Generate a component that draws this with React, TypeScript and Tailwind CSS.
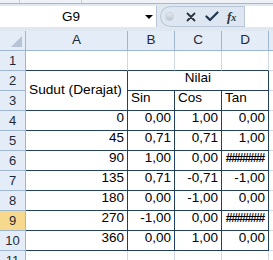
import React from "react";

const cols = ["A", "B", "C", "D"];

// Data rows 4..10: degrees, sin, cos, tan
const rows: [string, string, string, string][] = [
  ["0", "0,00", "1,00", "0,00"],
  ["45", "0,71", "0,71", "1,00"],
  ["90", "1,00", "0,00", "#######"],
  ["135", "0,71", "-0,71", "-1,00"],
  ["180", "0,00", "-1,00", "0,00"],
  ["270", "-1,00", "0,00", "#######"],
  ["360", "0,00", "1,00", "0,00"],
];

const GRID = "border-[#d0d7e5]";
const DARK = "border-[#24405f]";

function RowHead({ n, active }: { n: number; active?: boolean }) {
  return (
    <div
      className={`h-5 w-[26px] shrink-0 border-r border-b border-[#9eb6ce] flex items-center justify-center text-[13px] text-[#1e2a3a] ${
        active ? "bg-[#f7d98e]" : "bg-[#e4ecf7]"
      }`}
    >
      {n}
    </div>
  );
}

export default function App() {
  return (
    <div
      className="w-[273px] h-[260px] overflow-hidden bg-[#dfe7f1] text-black select-none"
      style={{ fontFamily: '"Liberation Sans", Arial, sans-serif' }}
    >
      {/* ribbon edge */}
      <div className="h-[4px] bg-[#eef1f6] border-b border-[#a9b8cb] flex">
        <div className="w-[20px] border-r border-[#c5d0de]" />
        <div className="w-[62px] border-r border-[#c5d0de]" />
      </div>

      {/* formula bar */}
      <div className="mt-[2px] h-[21px] flex items-stretch">
        <div className="w-[157px] bg-white border-r border-[#b9c7d8] flex items-center relative">
          <span className="flex-1 text-center text-[13.5px] leading-none pr-[14px]">G9</span>
          <span className="absolute right-[3px] top-[9px] w-0 h-0 border-l-[4px] border-r-[4px] border-t-[4px] border-l-transparent border-r-transparent border-t-black" />
        </div>
        <div className="ml-[3px] w-[84px] rounded-l-[11px] border border-r-0 border-[#b9c7d8] bg-[#dde6f1] flex items-center">
          <span className="ml-[4px] w-[9px] h-[9px] rounded-full bg-gradient-to-b from-[#e8edf3] to-[#b7c2cf] border border-[#c8d1dc]" />
          <svg className="ml-[12px]" width="10" height="10" viewBox="0 0 10 10">
            <path d="M1.5 1.5 L8.5 8.5 M8.5 1.5 L1.5 8.5" stroke="#2a3340" strokeWidth="1.8" strokeLinecap="round" />
          </svg>
          <svg className="ml-[9px]" width="14" height="11" viewBox="0 0 14 11">
            <path d="M1.5 5.5 L5 9 L12.5 1.5" stroke="#1f3550" strokeWidth="2.2" fill="none" strokeLinecap="round" strokeLinejoin="round" />
          </svg>
          <span
            className="ml-[8px] text-[13px] italic font-bold text-[#2a3340] leading-none"
            style={{ fontFamily: '"Liberation Serif", serif' }}
          >
            f<span className="text-[10px]">x</span>
          </span>
        </div>
        <div className="flex-1 bg-white border-l border-[#b9c7d8]" />
      </div>

      {/* sheet */}
      <div className="mt-[4px] bg-white">
        {/* column headers */}
        <div className="flex h-5 bg-[#e4ecf7] border-b border-[#9eb6ce]">
          <div className="w-[26px] shrink-0 border-r border-[#9eb6ce] relative">
            <svg className="absolute right-[3px] bottom-[3px]" width="11" height="11" viewBox="0 0 11 11">
              <path d="M11 0 L11 11 L0 11 Z" fill="#b6c4d6" />
            </svg>
          </div>
          {cols.map((c, i) => (
            <div
              key={c}
              className={`${i === 0 ? "w-[102px]" : "w-[47px]"} shrink-0 border-r border-[#9eb6ce] flex items-center justify-center text-[13.5px] text-[#1e2a3a]`}
            >
              {c}
            </div>
          ))}
          <div className="flex-1" />
        </div>

        {/* row 1 */}
        <div className="flex h-5">
          <RowHead n={1} />
          <div className={`w-[102px] border-r border-b ${GRID} !border-b-[#24405f]`} />
          <div className={`w-[47px] border-r border-b ${GRID} !border-b-[#24405f]`} />
          <div className={`w-[47px] border-r border-b ${GRID} !border-b-[#24405f]`} />
          <div className={`w-[47px] border-r border-b ${GRID} !border-b-[#24405f]`} />
          <div className={`flex-1 border-b ${GRID}`} />
        </div>

        {/* rows 2-3 with merged cells */}
        <div className="flex h-10">
          <div className="flex flex-col">
            <RowHead n={2} />
            <RowHead n={3} />
          </div>
          <div className={`w-[102px] border-r border-b ${DARK} flex items-center pl-[3px] text-[13.7px]`}>
            Sudut (Derajat)
          </div>
          <div className="flex flex-col w-[141px]">
            <div className={`h-5 border-r border-b ${DARK} flex items-end justify-center pb-[2px] text-[13.5px]`}>
              Nilai
            </div>
            <div className="flex h-5">
              {["Sin", "Cos", "Tan"].map((t) => (
                <div key={t} className={`w-[47px] border-r border-b ${DARK} flex items-end pl-[3px] pb-[2px] text-[13.5px]`}>
                  {t}
                </div>
              ))}
            </div>
          </div>
          <div className="flex-1 flex flex-col">
            <div className={`h-5 border-b ${GRID}`} />
            <div className={`h-5 border-b ${GRID}`} />
          </div>
        </div>

        {/* data rows */}
        {rows.map((r, i) => (
          <div key={i} className="flex h-5">
            <RowHead n={i + 4} active={i + 4 === 9} />
            {r.map((v, j) => (
              <div
                key={j}
                className={`${j === 0 ? "w-[102px]" : "w-[47px]"} shrink-0 border-r border-b ${DARK} flex items-end justify-end pr-[3px] pb-[2px] text-[13.5px] overflow-hidden whitespace-nowrap`}
              >
                {v.startsWith("#") ? (
                  <span className="text-[12px] tracking-[-1.2px] font-bold pb-[1px] pr-[1px]">{v}</span>
                ) : (
                  v
                )}
              </div>
            ))}
            <div className={`flex-1 border-b ${GRID}`} />
          </div>
        ))}

        {/* row 11 */}
        <div className="flex h-5">
          <RowHead n={11} />
          <div className={`w-[102px] border-r border-b ${GRID}`} />
          <div className={`w-[47px] border-r border-b ${GRID}`} />
          <div className={`w-[47px] border-r border-b ${GRID}`} />
          <div className={`w-[47px] border-r border-b ${GRID}`} />
          <div className={`flex-1 border-b ${GRID}`} />
        </div>
      </div>
    </div>
  );
}
